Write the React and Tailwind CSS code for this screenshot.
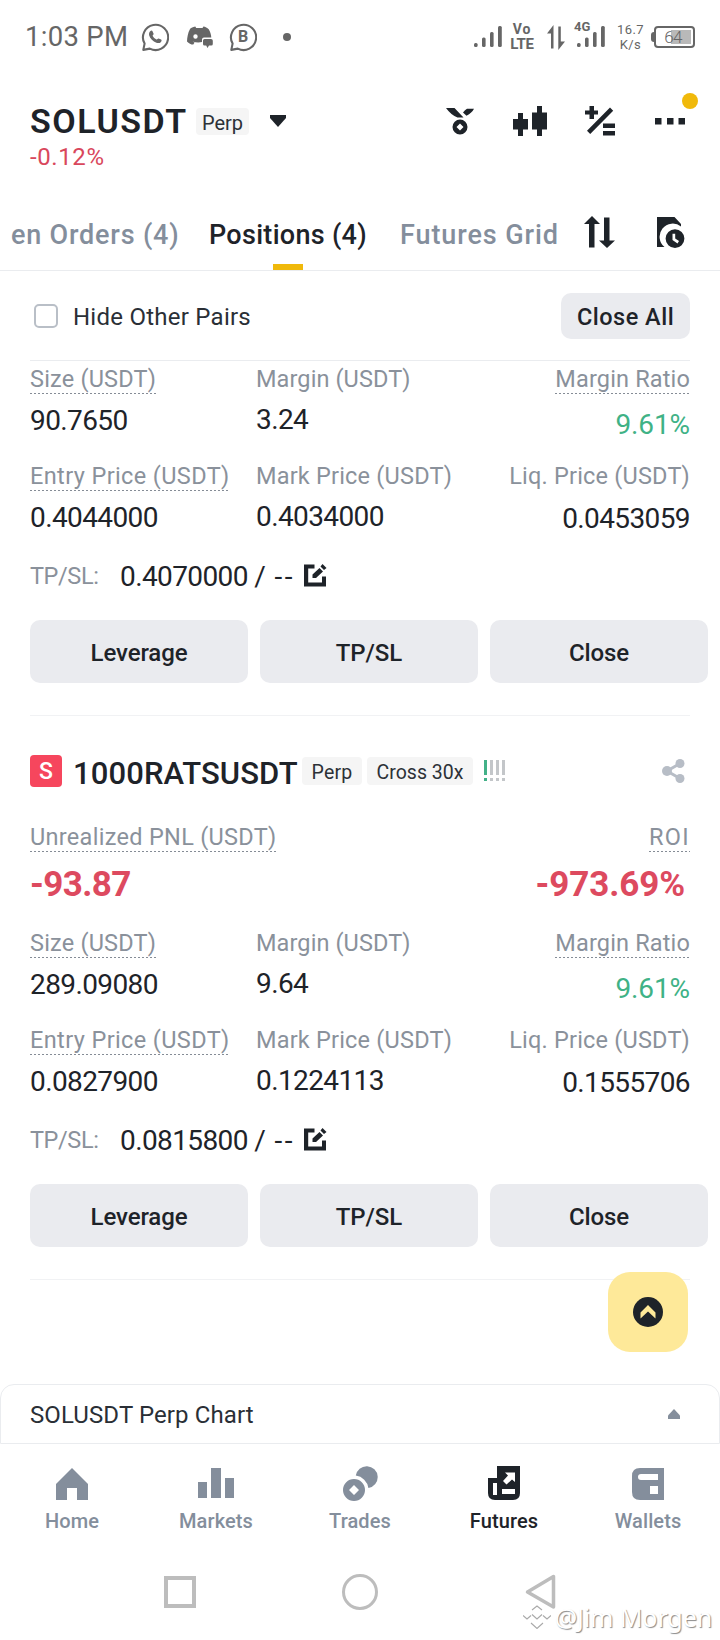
const LABEL = 'h-8 text-[23.5px] leading-[37px] text-[#8a919b] whitespace-nowrap';
const VALUE = 'text-[28px] leading-8 tracking-[-0.6px] text-[#1e2329] whitespace-nowrap';
const DASH = 'h-px w-full bg-[repeating-linear-gradient(90deg,#858c96_0_2px,transparent_2px_4px)]';

function Signal() {
  return (
    <svg width="28" height="22" viewBox="0 0 28 22" fill="#666">
      <rect x="0" y="17" width="3.6" height="4" rx="1.5" />
      <rect x="8" y="11.5" width="3.6" height="9.5" rx="1.5" />
      <rect x="16" y="6" width="3.6" height="15" rx="1.5" />
      <rect x="24" y="0" width="3.8" height="21" rx="1.5" />
    </svg>
  );
}

function Chat({ children }) {
  return (
    <svg width="28" height="29" viewBox="0 0 28 29" fill="none" stroke="#666" strokeWidth="2.1">
      <path d="M2.3 26.9 3.6 20.6A12.6 12.6 0 1 1 8.8 25.6Z" strokeLinejoin="round" />
      {children}
    </svg>
  );
}

function StatusBar() {
  return (
    <div className="flex h-[72px] shrink-0 items-center px-[25px] pt-[2px] text-[#666]">
      <span className="w-[116px] whitespace-nowrap text-[27.5px] tracking-[0.3px]">1:03 PM</span>
      <Chat>
        <path
          d="M9.2 8.2c1-.9 1.9-.8 2.3.1l1.1 2.4c.3.7-.9 1.5-1 2.1.5 1.4 2.4 3.2 3.9 3.7.7 0 1.4-1.3 2.100-1.1l2.5 1.200c.8.5.6 1.5-.1 2.3-1.200 1.3-2.800 1.5-4.600.8-3.4-1.3-6.300-4.200-7.200-7.200-.5-1.700.1-3.400 1-4.300Z"
          fill="#666"
          stroke="none"
        />
      </Chat>
      <svg className="ml-[18px]" width="26" height="22" viewBox="0 0 26 22" fill="#666">
        <path
          fillRule="evenodd"
          d="M8.3.5 6.5 1C4.5 1.500 3.500 2.300 2.900 3.300.9 7 .2 11.200 0 15.500 1.800 17.600 4 18.600 6.300 18.600L7.600 16.500 5.500 15.400C9 16.600 12 16.700 15 16V13.500Q15 11.500 17 11.500H24.300C24.200 8.500 23 5.500 21.700 3.300 20.300 1.700 18.200.8 16.400.5L15.500 1.900H9.200ZM8.500 8.200A2.200 2.300 0 1 0 8.500 12.800 2.200 2.300 0 1 0 8.500 8.200Z"
        />
        <path d="M17.500 13H24q1.800 0 1.800 1.700v3.200q0 1.500-1.500 1.500H22L20.500 22l-1.300-2.600h-1.700q-1.500 0-1.500-1.500v-3.300q0-1.600 1.500-1.600Z" />
      </svg>
      <div className="relative ml-4 flex items-center justify-center">
        <Chat />
        <span className="absolute left-[9px] top-[5px] text-[16px] font-bold leading-[18px]">B</span>
      </div>
      <span className="ml-[26px] size-2 rounded-full bg-[#666]" />
      <div className="ml-auto flex items-center">
        <Signal />
        <div className="ml-[7px] flex w-[26px] flex-col items-center font-bold">
          <span className="text-[14px] leading-[15px] tracking-[1px]">Vo</span>
          <span className="text-[15px] leading-[15px] tracking-[-0.2px]">LTE</span>
        </div>
        <svg className="ml-[12px]" width="18" height="25" viewBox="0 0 18 25" fill="#666">
          <path d="M6.500 0V23.500H4V8.500H0ZM11.300 1.500h2.500V16.500H18L11.300 25Z" />
        </svg>
        <div className="relative ml-3">
          <Signal />
          <span className="absolute -left-[3px] -top-[5px] bg-white pr-px text-[13px] font-bold leading-3">4G</span>
        </div>
        <div className="ml-[13px] flex w-[25px] flex-col items-center text-[13px] leading-[15px] tracking-[0.4px]">
          <span>16.7</span>
          <span>K/s</span>
        </div>
        <div className="ml-[8px] flex items-center">
          <span className="h-[10px] w-[3px] rounded-l bg-[#666]" />
          <div className="relative flex h-[22px] w-[41px] items-center justify-center rounded-[4px] border-2 border-[#666]">
            <span className="absolute right-[2px] top-[2px] h-[14px] w-[20px] bg-[#b9b9b9]" />
            <span className="relative mr-[3px] text-[17px] font-light leading-none tracking-[-0.8px]">64</span>
          </div>
        </div>
      </div>
    </div>
  );
}

function Header() {
  return (
    <div className="flex h-[108px] shrink-0 items-start px-[30px] pt-[29px]">
      <div className="flex flex-col">
        <div className="flex h-10 items-center">
          <h1 className="w-[166px] whitespace-nowrap text-[34px] font-semibold tracking-[1.5px] text-[#1e2329]">SOLUSDT</h1>
          <span className="flex h-[27px] w-[53px] items-center justify-center rounded bg-[#f5f5f5] pt-1 text-[20px] text-[#2c3137]">
            Perp
          </span>
          <svg className="ml-[21px]" width="16" height="12" viewBox="0 0 16 12" fill="#1e2329">
            <path d="M0 0H16V3L8 12 0 3Z" />
          </svg>
        </div>
        <span className="text-[24px] leading-8 tracking-[0.6px] text-[#d9475c]">-0.12%</span>
      </div>
      <div className="relative ml-auto mr-[5px] flex h-10 items-center">
        <svg width="28" height="27" viewBox="0 0 28 27" fill="#1e2329">
          <path d="M0 0H8.500L17.500 9.500H11.500Q5 7 0 0ZM21 .8H28Q26 5 20.500 7.800L17 4.500Q19 2 21 .8Z" />
          <path fillRule="evenodd" d="M14 11.500a7.500 7.500 0 1 1 0 15 7.500 7.500 0 1 1 0-15ZM14 15.500 10.500 19 14 22.500 17.500 19Z" />
        </svg>
        <svg className="ml-[39px]" width="34" height="30" viewBox="0 0 34 30" fill="#1e2329">
          <path d="M5 7h5v6h5v10.500h-5V30H5v-6.500H0V13h5ZM24 0h5v6.500h5v17h-5V30h-5v-6.500h-5v-17h5Z" />
        </svg>
        <svg className="ml-[38px]" width="30" height="30" viewBox="0 0 30 30" fill="#1e2329">
          <path d="M4.500 0h4.500v4.500H13v4H9V13h-4.500V8.500H0v-4h4.500ZM25 1.500 28.200 4.700 5.200 28 2 24.800ZM18 17.500h12V22H18ZM18 25h12v4.500H18Z" />
        </svg>
        <svg className="ml-10" width="30" height="7" viewBox="0 0 30 7" fill="#1e2329">
          <path d="M0 0h6.500v6.500H0ZM12 0h6.500v6.500H12ZM23.500 0H30v6.500h-6.500Z" />
        </svg>
        <span className="absolute -right-[13px] -top-[8px] size-4 rounded-full bg-[#f0b90b]" />
      </div>
    </div>
  );
}

function Tabs() {
  return (
    <div className="flex h-[91px] shrink-0 items-start border-b border-[#eaecef] text-[27px] font-medium text-[#848e9c]">
      <span className="ml-[11px] mt-[35px] w-[199px] whitespace-nowrap leading-10 tracking-[0.8px]">en Orders (4)</span>
      <div className="flex w-[156px] flex-col items-center pt-[35px] text-[#1e2329]">
        <span className="whitespace-nowrap leading-10 tracking-[0.3px]">Positions (4)</span>
        <span className="mt-[9px] h-[6px] w-[30px] bg-[#f0b90b]" />
      </div>
      <span className="ml-[34px] mt-[35px] w-[160px] whitespace-nowrap leading-10 tracking-[0.9px]">Futures Grid</span>
      <svg className="ml-6 mt-9" width="31" height="32" viewBox="0 0 31 32" fill="#1e2329">
        <path d="M8 0 16 8H10.500V31.500H5V8H0ZM20 1.500h5.500V24.500H31L23 32 15 24.500h5Z" />
      </svg>
      <svg className="ml-[42px] mt-[37px]" width="28" height="31" viewBox="0 0 28 31" fill="#1e2329">
        <path d="M0 0H17.500L24 7V9.500A12 12 0 0 0 7.500 30H0Z" />
        <path fillRule="evenodd" d="M18 12.200a9.400 9.400 0 1 1 0 18.800 9.400 9.400 0 1 1 0-18.800ZM15.500 16.800V23L20.500 26.500 22 24 18.200 21.500V16.800Z" />
      </svg>
    </div>
  );
}

function Filter() {
  return (
    <div className="mx-[30px] flex h-[90px] shrink-0 items-center border-b border-[#eaecef]">
      <span className="ml-1 size-6 rounded-[5px] border-2 border-[#b9bfc7]" />
      <span className="ml-[15px] mt-[3px] text-[24px] tracking-[0.25px] text-[#2a2f36]">Hide Other Pairs</span>
      <button className="ml-auto flex h-[46px] w-[129px] items-center justify-center rounded-[10px] bg-[#eaebef] pt-1 text-[23.500px] font-medium tracking-[0.5px] text-[#1e2329]">
        Close All
      </button>
    </div>
  );
}

function Underlined({ children, tracking = 'tracking-[0.2px]' }) {
  return (
    <div className="flex w-max flex-col">
      <span className={`${LABEL} ${tracking}`}>{children}</span>
      <span className={DASH} />
    </div>
  );
}

function EditIcon() {
  return (
    <svg width="23" height="23" viewBox="0 0 23 23" fill="#1e2329">
      <path d="M0 0.500H10.500V4.500H4.200V18.500H18V12.500H22V22.500H0ZM18.500 0 22.500 4 20 6 16.500 2.500ZM15.500 4 19 7.500 12 14H8.500V10.500Z" />
    </svg>
  );
}

function Actions() {
  return (
    <div className="flex gap-3">
      {['Leverage', 'TP/SL', 'Close'].map((name) => (
        <button
          key={name}
          className="flex h-[63px] w-[218px] items-center justify-center rounded-[10px] bg-[#eaebef] pt-[3px] text-[24px] font-medium tracking-[-0.1px] text-[#1e2329]"
        >
          {name}
        </button>
      ))}
    </div>
  );
}

function PositionDetails({ p }) {
  return (
    <div className="h-[355px] shrink-0 pl-[30px]">
      <div className="flex h-[97px] pr-[30px]">
        <div className="flex w-[226px] flex-col">
          <Underlined>Size (USDT)</Underlined>
          <span className={`${VALUE} mt-[11px]`}>{p.size}</span>
        </div>
        <div className="flex flex-col">
          <span className={`${LABEL} tracking-[0.1px]`}>Margin (USDT)</span>
          <span className={`${VALUE} mt-[11px]`}>{p.margin}</span>
        </div>
        <div className="ml-auto flex flex-col items-end">
          <Underlined tracking="tracking-[0.15px]">Margin Ratio</Underlined>
          <span className="mt-[15px] whitespace-nowrap text-[28px] leading-8 tracking-[-0.100px] text-[#3fb286]">9.61%</span>
        </div>
      </div>
      <div className="flex h-[97px] pr-[30px]">
        <div className="flex w-[226px] flex-col">
          <Underlined tracking="tracking-[0.38px]">Entry Price (USDT)</Underlined>
          <span className={`${VALUE} mt-[11px]`}>{p.entry}</span>
        </div>
        <div className="flex flex-col">
          <span className={`${LABEL} tracking-[0.2px]`}>Mark Price (USDT)</span>
          <span className={`${VALUE} mt-[11px]`}>{p.mark}</span>
        </div>
        <div className="ml-auto flex flex-col items-end">
          <span className={`${LABEL} tracking-[0.2px]`}>Liq. Price (USDT)</span>
          <span className={`${VALUE} mt-[13px]`}>{p.liq}</span>
        </div>
      </div>
      <div className="flex h-[65px] items-start pt-[3px]">
        <span className={`${LABEL} w-[90px] tracking-[-0.4px]`}>TP/SL:</span>
        <span className={`${VALUE} mt-[3px] w-[184px]`}>
          {p.tp} / <span className="ml-[3px] tracking-[2.500px]">--</span>
        </span>
        <span className="mt-[6px]">
          <EditIcon />
        </span>
      </div>
      <Actions />
      <div className="mr-[30px] mt-8 h-px bg-[#f1f2f4]" />
    </div>
  );
}

function PositionHeader() {
  return (
    <div className="flex h-[103px] shrink-0 items-start px-[30px] pt-[39px]">
      <span className="flex size-8 items-center justify-center rounded bg-[#f6465d] pt-[2px] text-[23px] font-medium text-white">S</span>
      <span className="ml-[11px] mt-[3px] w-[229px] whitespace-nowrap text-[31px] font-medium leading-8 tracking-[0.1px] text-[#1e2329]">
        1000RATSUSDT
      </span>
      <span className="mt-[2px] flex h-7 w-[60px] items-center justify-center rounded bg-[#f5f5f5] pt-[3px] text-[19.500px] tracking-[0.2px] text-[#2c3137]">
        Perp
      </span>
      <span className="ml-[5px] mt-[2px] flex h-7 w-[106px] items-center justify-center rounded bg-[#f5f5f5] pt-[3px] text-[19.500px] text-[#2c3137]">
        Cross 30x
      </span>
      <svg className="ml-[11px] mt-[5px]" width="21" height="21" viewBox="0 0 21 21" fill="#c3c6c9">
        <path fill="#43b188" d="M0 0h3v15H0ZM0 18h3v3H0Z" />
        <path d="M6 0h3v15H6ZM6 18h3v3H6ZM12 0h3v15h-3ZM12 18h3v3h-3ZM18 0h3v15h-3ZM18 18h3v3h-3Z" />
      </svg>
      <svg className="ml-auto mr-[5px] mt-1" width="23" height="24" viewBox="0 0 23 24" fill="#b7bdc6">
        <path d="M18 4.500 5 12 18 19.500" fill="none" stroke="#b7bdc6" strokeWidth="3" />
        <circle cx="18" cy="4.500" r="4.500" />
        <circle cx="5" cy="12" r="5" />
        <circle cx="18" cy="19.500" r="4.500" />
      </svg>
    </div>
  );
}

function Pnl() {
  return (
    <div className="flex h-[106px] shrink-0 justify-between px-[30px] text-[#dd4a5f]">
      <div className="flex flex-col">
        <Underlined tracking="tracking-[0.3px]">Unrealized PNL (USDT)</Underlined>
        <span className="mt-[13px] text-[35px] font-bold leading-10 tracking-[-0.6px]">-93.87</span>
      </div>
      <div className="flex flex-col items-end">
        <Underlined tracking="tracking-[1.300px]">ROI</Underlined>
        <span className="mr-[5px] mt-[13px] text-[35px] font-bold leading-10 tracking-[-0.1px]">-973.69%</span>
      </div>
    </div>
  );
}

const icons = {
  Home: <path d="M18 4 34 20V36H23V24H13V36H2V20Z" />,
  Markets: <path d="M0 18h9v16H0ZM13 4h10v30H13ZM27 14h9v20h-9Z" />,
  Trades: (
    <>
      <path fillRule="evenodd" d="M12 15a11 11 0 1 1 0 22 11 11 0 1 1 0-22ZM12 21 7 26 12 31 17 26Z" />
      <path d="M13.800 11.600A11 11 0 1 1 26.400 24A14.500 14.500 0 0 0 13.800 11.600Z" />
    </>
  ),
  Futures: (
    <path
      fillRule="evenodd"
      d="M11 2H34V29Q34 36 27 36H9Q2 36 2 29V14H11ZM7 19v12h4V19ZM16 25v5h13v-5ZM19 8.500h10V18l-3-2.500-5.500 5-3.500-3.500 5-5.500Z"
    />
  ),
  Wallets: (
    <path fillRule="evenodd" d="M10 4H34V36H10Q2 36 2 28V12Q2 4 10 4ZM11 10a3 3 0 0 0 0 6H28V10ZM20 22v8h8v-8Z" />
  ),
};

function BottomNav() {
  return (
    <nav className="flex h-[107px] shrink-0 pt-[20px]">
      {Object.entries(icons).map(([name, icon]) => {
        const color = name === 'Futures' ? 'text-[#1e2329]' : 'text-[#848e9c]';
        return (
          <div key={name} className={`flex flex-1 flex-col items-center ${color}`}>
            <svg width="36" height="38" viewBox="0 0 36 38" fill="currentColor">
              {icon}
            </svg>
            <span className="mt-[5px] text-[20px] font-medium leading-7 tracking-[0.1px]">{name}</span>
          </div>
        );
      })}
    </nav>
  );
}

function SystemNav() {
  return (
    <div className="relative flex h-[89px] shrink-0 justify-center pt-[23px]">
      <div className="flex h-9 items-center">
        <span className="size-8 border-4 border-[#bdbdbd]" />
        <span className="ml-[146px] size-9 rounded-full border-[3.500px] border-[#bdbdbd]" />
        <svg className="ml-[147px]" width="31" height="36" viewBox="0 0 31 36" fill="none" stroke="#bdbdbd" strokeWidth="3.500">
          <path d="M28.500 2.500V33L2.500 18Z" strokeLinejoin="round" />
        </svg>
      </div>
      <div className="absolute bottom-[7px] right-2 flex items-center gap-1 text-white">
        <svg width="28" height="24" viewBox="0 0 28 24" fill="none" stroke="#a9a9a9" strokeWidth="1.100">
          <path d="M9 5 14 1 19 5M9 9.500 14 14 19 9.500M0 10.500 4 14 8 10.500M20 10.500 24 14 28 10.500M8 18 14 23.500 20 18" />
        </svg>
        <span className="text-[25px] leading-8 tracking-[-0.1px] [font-family:'Noto_Sans',sans-serif] [text-shadow:1px_1px_1px_#8a8a8a]">
          @Jim Morgen
        </span>
      </div>
    </div>
  );
}

export default function App() {
  return (
    <div className="flex h-[1640px] w-[720px] flex-col overflow-hidden bg-white font-['Roboto',sans-serif]">
      <StatusBar />
      <Header />
      <Tabs />
      <Filter />
      <PositionDetails
        p={{ size: '90.7650', margin: '3.24', entry: '0.4044000', mark: '0.4034000', liq: '0.0453059', tp: '0.4070000' }}
      />
      <PositionHeader />
      <Pnl />
      <PositionDetails
        p={{ size: '289.09080', margin: '9.64', entry: '0.0827900', mark: '0.1224113', liq: '0.1555706', tp: '0.0815800' }}
      />
      <div className="relative h-[104px] shrink-0">
        <button className="absolute -top-2 right-8 flex size-20 items-center justify-center rounded-[22px] bg-[#fee999]">
          <svg width="30" height="30" viewBox="0 0 30 30">
            <circle cx="15" cy="15" r="15" fill="#1e2329" />
            <path d="M15 8 22.500 15.500V21.500L15 14.500 7.500 21.500V15.500Z" fill="#fee999" />
          </svg>
        </button>
      </div>
      <div className="flex h-[60px] shrink-0 items-center justify-between rounded-t-[14px] border border-[#eaecef] pl-[29px] pr-[39px] pt-[2px] text-[24px] text-[#2a2f36]">
        <span className="tracking-[0.1px]">SOLUSDT Perp Chart</span>
        <svg className="-mt-[3px]" width="12" height="10" viewBox="0 0 12 10" fill="#848e9c">
          <path d="M6 0 12 6.500V10H0V6.500Z" />
        </svg>
      </div>
      <BottomNav />
      <SystemNav />
    </div>
  );
}
